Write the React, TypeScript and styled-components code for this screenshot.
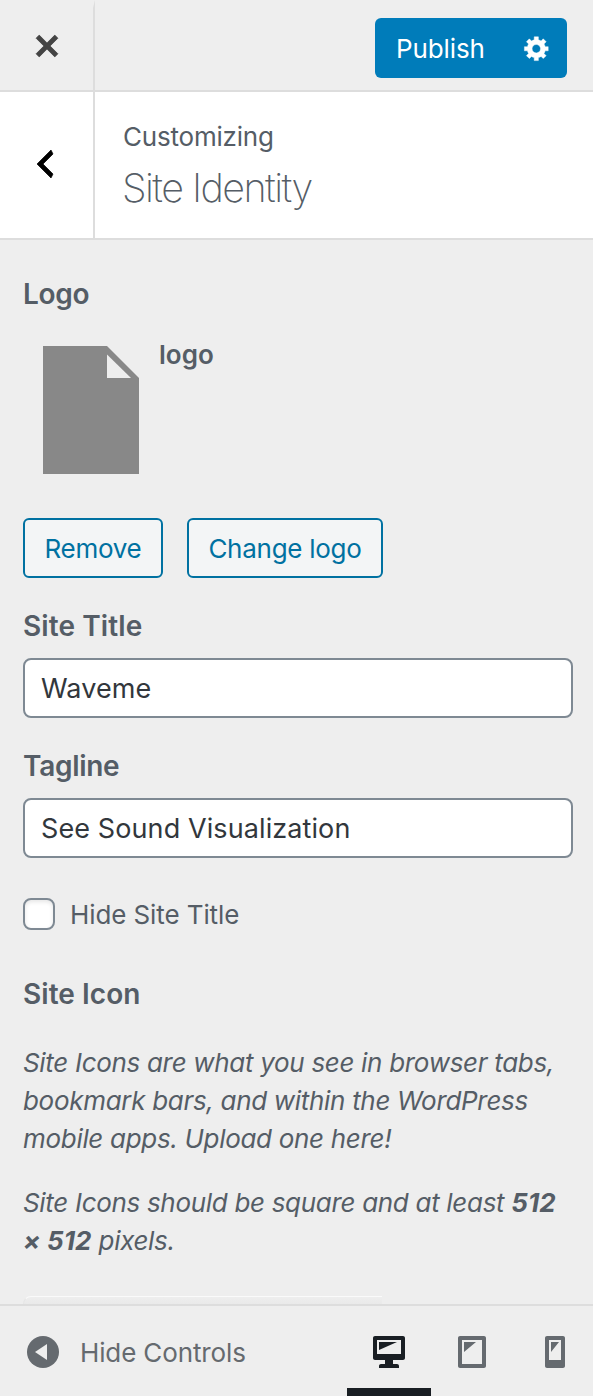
import React from "react";
import styled, { createGlobalStyle } from "styled-components";

const GlobalStyle = createGlobalStyle`
  * { box-sizing: border-box; }
  body { margin: 0; background: #eee; }
  button, input { font: inherit; letter-spacing: inherit; }
`;

const Panel = styled.div`
  display: flex;
  flex-direction: column;
  width: 593px;
  height: 1396px;
  overflow: hidden;
  background: #eee;
  color: #555d66;
  font-family: Inter, "Liberation Sans", sans-serif;
  font-size: 26px;
  line-height: 38px;
`;

const TopBar = styled.header`
  display: flex;
  flex: none;
  justify-content: space-between;
  height: 92px;
  border-bottom: 2px solid #ddd;
`;

const CloseButton = styled.button`
  display: flex;
  align-items: center;
  justify-content: center;
  width: 95px;
  height: 90px;
  padding: 0 0 7px 1px;
  border: 0 solid #ddd;
  border-top: 8px solid #eee;
  border-right: 2px solid #ddd;
  background: transparent;
  color: #444;
`;

const PublishGroup = styled.div`
  display: flex;
  height: 60px;
  margin: 18px 26px 0 0;
  border-radius: 6px;
  overflow: hidden;
  background: #007cba;
`;

const PublishButton = styled.button`
  width: 130px;
  padding: 1px 0 0 21px;
  border: 0;
  background: transparent;
  color: #fff;
  text-align: left;
  letter-spacing: -0.1px;
`;

const SettingsButton = styled.button`
  display: flex;
  align-items: center;
  justify-content: center;
  width: 62px;
  padding: 0 0 0 2px;
  border: 0;
  background: transparent;
  color: #fff;
`;

const SectionHeader = styled.div`
  display: flex;
  flex: none;
  height: 148px;
  border-bottom: 2px solid #ddd;
  background: #fff;
`;

const BackButton = styled.button`
  display: flex;
  align-items: center;
  width: 95px;
  padding: 0 0 2px 25px;
  border: 0;
  border-right: 2px solid #ddd;
  background: #fff;
  color: #000;
`;

const Heading = styled.div`
  padding: 26px 0 0 28px;
`;

const Kicker = styled.div`
  letter-spacing: -0.2px;
`;

const SectionTitle = styled.h3`
  margin: 6px 0 0 -1px;
  font-size: 39.5px;
  font-weight: 250;
  line-height: 53px;
  letter-spacing: -1.55px;
`;

const Controls = styled.main`
  flex: 1;
  min-height: 0;
  overflow: hidden;
  padding: 34px 20px 0 23px;
`;

const Label = styled.div<{ $top?: number; $tracking?: number }>`
  margin-top: ${(p) => p.$top ?? 0}px;
  font-size: 28px;
  font-weight: 600;
  line-height: 40px;
  letter-spacing: ${(p) => p.$tracking ?? -0.3}px;
`;

const Attachment = styled.div`
  display: flex;
  gap: 20px;
  padding: 32px 0 0 20px;
`;

const AttachmentName = styled.div`
  margin-top: -10px;
  font-weight: 600;
  letter-spacing: 0;
`;

const Actions = styled.div`
  display: flex;
  gap: 24px;
  margin-top: 44px;
`;

const ActionButton = styled.button<{ $width: number }>`
  width: ${(p) => p.$width}px;
  height: 60px;
  padding: 2px 0 0;
  border: 2px solid #0071a1;
  border-radius: 6px;
  background: #f3f5f6;
  color: #0071a1;
  white-space: nowrap;
  letter-spacing: -0.27px;
`;

const TextField = styled.input`
  display: block;
  width: 550px;
  height: 60px;
  margin-top: 12px;
  padding: 0 16px;
  border: 2px solid #7e8993;
  border-radius: 8px;
  outline: 0;
  background: #fff;
  color: #32373c;
  font-size: 27px;
  letter-spacing: 0.1px;
`;

const CheckRow = styled.label`
  display: flex;
  align-items: center;
  gap: 15px;
  height: 38px;
  margin-top: 37px;
  letter-spacing: -0.1px;
`;

const CheckText = styled.span`
  padding-top: 2px;
`;

const Checkbox = styled.input.attrs({ type: "checkbox" })`
  appearance: none;
  width: 32px;
  height: 32px;
  margin: 0;
  border: 2px solid #7e8993;
  border-radius: 8px;
  background: #fff;
  box-shadow: inset 0 2px 4px rgba(0, 0, 0, 0.1);
`;

const Description = styled.p<{ $top: number }>`
  margin: ${(p) => p.$top}px 0 0;
  font-style: italic;
  white-space: nowrap;
  letter-spacing: -0.31px;

  strong {
    font-weight: 700;
    letter-spacing: 0.1px;
  }
`;

const IconPreview = styled.div`
  width: 359px;
  height: 40px;
  margin-top: 36px;
  border-top: 1px solid #fafafa;
  border-left: 1px solid #e6e6e6;
  border-radius: 8px 0 0 0;
  background: linear-gradient(#eee, #e6e6e6 12px);
`;

const Footer = styled.footer`
  display: flex;
  flex: none;
  height: 92px;
  overflow: hidden;
  border-top: 2px solid #ddd;
  color: #656a6f;
`;

const CollapseButton = styled.button`
  display: flex;
  flex: none;
  align-items: center;
  gap: 21px;
  width: 347px;
  padding: 2px 0 0 27px;
  border: 0;
  background: transparent;
  color: inherit;
  letter-spacing: -0.13px;
`;

const CollapseText = styled.span`
  padding-top: 2px;
`;

const DeviceButton = styled.button<{ $active?: boolean; $width: number }>`
  display: flex;
  flex: none;
  justify-content: center;
  width: ${(p) => p.$width}px;
  padding: 26px 0 0;
  border: 0;
  border-bottom: 8px solid ${(p) => (p.$active ? "#191e23" : "transparent")};
  background: transparent;
  color: ${(p) => (p.$active ? "#191e23" : "#656a6f")};
`;

const Glyph = ({ d, size, weight = 0 }: { d: string; size: number; weight?: number }) => (
  <svg width={size} height={size} viewBox="0 0 20 20" fill="currentColor" fillRule="evenodd" aria-hidden="true">
    <path d={d} stroke="currentColor" strokeWidth={weight} strokeLinejoin="round" />
  </svg>
);

const icons = {
  close: "M14.95 6.46L11.41 10l3.54 3.54-1.41 1.41L10 11.42l-3.53 3.53-1.42-1.42L8.58 10 5.05 6.47l1.42-1.42L10 8.58l3.54-3.53z",
  back: "M14 5l-5 5 5 5-1 2-7-7 7-7z",
  gear: "M18 12h-2.18c-.17.7-.44 1.35-.81 1.93l1.54 1.54-2.1 2.1-1.54-1.54c-.58.36-1.23.63-1.91.79V19H8v-2.18c-.68-.16-1.33-.43-1.91-.79l-1.54 1.54-2.12-2.12 1.54-1.54c-.36-.58-.63-1.23-.79-1.91H1V9.03h2.17c.16-.7.44-1.35.8-1.94L2.43 5.55l2.1-2.1 1.54 1.54c.58-.37 1.24-.64 1.93-.81V2h3v2.18c.68.16 1.33.43 1.91.79l1.54-1.54 2.12 2.12-1.54 1.54c.36.59.64 1.24.8 1.94H18V12zm-8.5 1.5c1.66 0 3-1.34 3-3s-1.34-3-3-3-3 1.34-3 3 1.34 3 3 3z",
  desktop: "M3 2h14c.55 0 1 .45 1 1v10c0 .55-.45 1-1 1h-5v2h2c.55 0 1 .45 1 1v1H5v-1c0-.55.45-1 1-1h2v-2H3c-.55 0-1-.45-1-1V3c0-.55.45-1 1-1zm13 9V4H4v7h12zM5 5h9L5 9V5z",
  tablet: "M4 2h12c.55 0 1 .45 1 1v14c0 .55-.45 1-1 1H4c-.55 0-1-.45-1-1V3c0-.55.45-1 1-1zm11 14V4H5v12h10zM6 5h6l-6 5V5z",
  phone: "M6 2h8c.55 0 1 .45 1 1v14c0 .55-.45 1-1 1H6c-.55 0-1-.45-1-1V3c0-.55.45-1 1-1zm7 12V4H7v10h6zM8 5h4l-4 5V5z",
};

const FileIcon = () => (
  <svg width="96" height="128" viewBox="0 0 96 128" aria-hidden="true">
    <path d="M0 0H64L96 32V128H0Z" fill="#888" />
    <path d="M64 8.5V32H88Z" fill="#eee" />
  </svg>
);

const CollapseIcon = () => (
  <svg width="32" height="32" viewBox="0 0 32 32" aria-hidden="true">
    <circle cx="16" cy="16" r="16" fill="#656a6f" />
    <path d="M8 16L20 8V24Z" fill="#eee" />
  </svg>
);

export default function App() {
  return (
    <Panel>
      <GlobalStyle />
      <TopBar>
        <CloseButton aria-label="Close"><Glyph d={icons.close} size={44} weight={0.35} /></CloseButton>
        <PublishGroup>
          <PublishButton>Publish</PublishButton>
          <SettingsButton aria-label="Publish settings"><Glyph d={icons.gear} size={28} weight={0.3} /></SettingsButton>
        </PublishGroup>
      </TopBar>
      <SectionHeader>
        <BackButton aria-label="Back"><Glyph d={icons.back} size={40} weight={0.35} /></BackButton>
        <Heading>
          <Kicker>Customizing</Kicker>
          <SectionTitle>Site Identity</SectionTitle>
        </Heading>
      </SectionHeader>
      <Controls>
        <Label>Logo</Label>
        <Attachment>
          <FileIcon />
          <AttachmentName>logo</AttachmentName>
        </Attachment>
        <Actions>
          <ActionButton $width={140}>Remove</ActionButton>
          <ActionButton $width={196}>Change logo</ActionButton>
        </Actions>
        <Label $top={28} $tracking={0.1}>Site Title</Label>
        <TextField defaultValue="Waveme" aria-label="Site Title" />
        <Label $top={28}>Tagline</Label>
        <TextField defaultValue="See Sound Visualization" aria-label="Tagline" />
        <CheckRow>
          <Checkbox />
          <CheckText>Hide Site Title</CheckText>
        </CheckRow>
        <Label $top={41} $tracking={0.05}>Site Icon</Label>
        <Description $top={30}>
          Site Icons are what you see in browser tabs,<br />
          bookmark bars, and within the WordPress<br />
          mobile apps. Upload one here!
        </Description>
        <Description $top={26}>
          Site Icons should be square and at least <strong>512<br />× 512</strong> pixels.
        </Description>
        <IconPreview />
      </Controls>
      <Footer>
        <CollapseButton>
          <CollapseIcon />
          <CollapseText>Hide Controls</CollapseText>
        </CollapseButton>
        <DeviceButton $active $width={84} aria-label="Desktop"><Glyph d={icons.desktop} size={40} /></DeviceButton>
        <DeviceButton $width={82} aria-label="Tablet"><Glyph d={icons.tablet} size={40} /></DeviceButton>
        <DeviceButton $width={84} aria-label="Mobile"><Glyph d={icons.phone} size={40} /></DeviceButton>
      </Footer>
    </Panel>
  );
}
